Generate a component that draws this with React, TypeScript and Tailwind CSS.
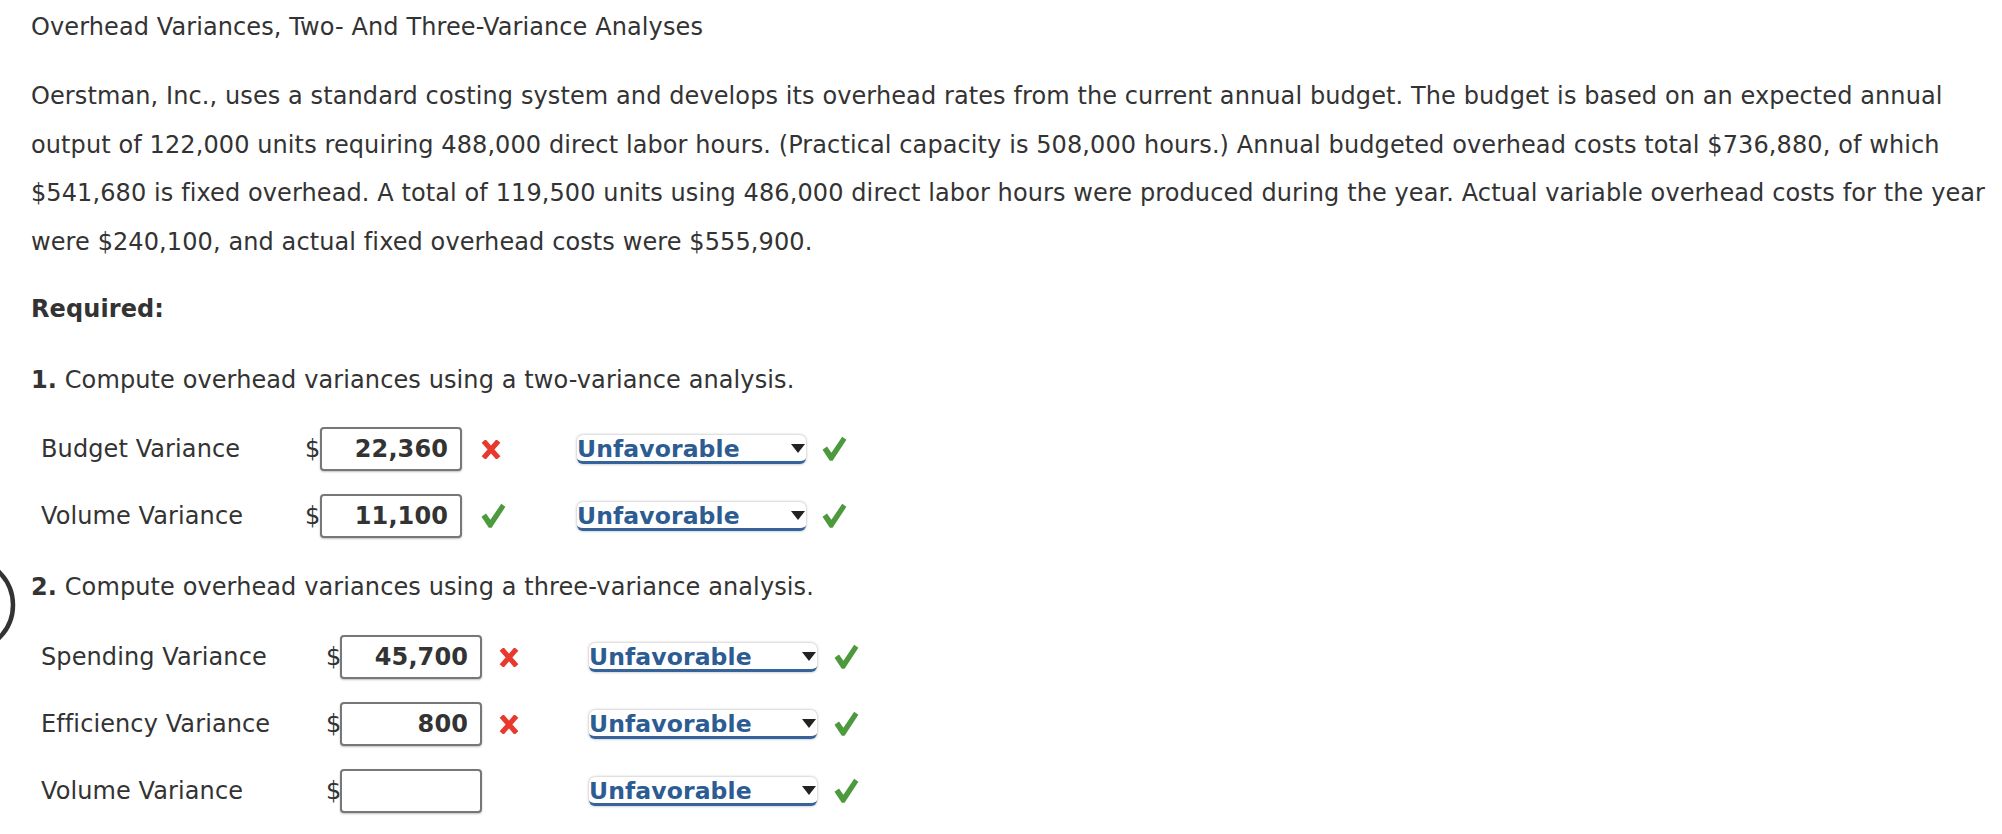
import React from 'react';

const font = "font-['DejaVu_Sans',Verdana,sans-serif]";

function RedX() {
  return (
    <svg width="20" height="19" viewBox="0 0 20 19" className="block">
      <path d="M2.6 1 L17.4 18 M17.4 1 L2.6 18" stroke="#e8392e" strokeWidth="5.2" fill="none" />
    </svg>
  );
}

function GreenCheck() {
  return (
    <svg width="25" height="26" viewBox="0 0 25 26" className="block">
      <path d="M0.5 13.8 L5 10.6 L9.4 16.8 L20.2 0.8 L24.4 3.8 L10.6 24.8 L7.8 24.8 Z" fill="#4c9a3d" />
    </svg>
  );
}

function Select() {
  return (
    <div className="relative flex h-[29px] w-full items-end rounded-[6px] border-b-[3px] border-[#36649a] bg-white shadow-[0_0_3px_rgba(0,0,0,0.35)]">
      <span className="text-[23.5px] font-bold leading-[24px] text-[#2c5c92]">Unfavorable</span>
      <svg width="14" height="9" viewBox="0 0 14 9" className="absolute right-[1px] top-[9px]">
        <path d="M0 0 H14 L7 9 Z" fill="#222" />
      </svg>
    </div>
  );
}

type Row = { label: string; value: string; mark: 'x' | 'check' | null };

function VarianceRow({ row, labelW, dollarW, markW, selectW, checkGap }: { row: Row; labelW: string; dollarW: string; markW: string; selectW: string; checkGap: string }) {
  return (
    <div className="flex h-[67px] items-center">
      <div className={labelW}>{row.label}</div>
      <div className={dollarW}>$</div>
      <div className="flex h-[44px] w-[142px] items-center justify-end rounded-[4px] border-2 border-[#777] bg-white pr-[12px] font-bold shadow-[0_1px_2px_rgba(0,0,0,0.25)]">
        {row.value}
      </div>
      <div className={markW}>
        {row.mark === 'x' && <RedX />}
        {row.mark === 'check' && <GreenCheck />}
      </div>
      <div className={selectW}>
        <Select />
      </div>
      <div className={checkGap}>
        <GreenCheck />
      </div>
    </div>
  );
}

export default function App() {
  const part1: Row[] = [
    { label: 'Budget Variance', value: '22,360', mark: 'x' },
    { label: 'Volume Variance', value: '11,100', mark: 'check' },
  ];
  const part2: Row[] = [
    { label: 'Spending Variance', value: '45,700', mark: 'x' },
    { label: 'Efficiency Variance', value: '800', mark: 'x' },
    { label: 'Volume Variance', value: '', mark: null },
  ];

  return (
    <div className={`relative min-h-screen bg-white pl-[31px] pt-[3px] text-[24px] leading-[48.5px] tracking-[0.1px] text-[#333] ${font}`}>
      {/* bit of a circle on the left edge */}
      <svg width="16" height="90" viewBox="0 0 16 90" className="absolute left-0 top-[560px]">
        <circle cx="-32.9" cy="45" r="45.9" stroke="#333" strokeWidth="4.5" fill="none" />
      </svg>

      <div className="whitespace-nowrap">Overhead Variances, Two- And Three-Variance Analyses</div>

      <div className="mt-[20.5px] whitespace-nowrap">
        <div>Oerstman, Inc., uses a standard costing system and develops its overhead rates from the current annual budget. The budget is based on an expected annual</div>
        <div>output of 122,000 units requiring 488,000 direct labor hours. (Practical capacity is 508,000 hours.) Annual budgeted overhead costs total $736,880, of which</div>
        <div>$541,680 is fixed overhead. A total of 119,500 units using 486,000 direct labor hours were produced during the year. Actual variable overhead costs for the year</div>
        <div>were $240,100, and actual fixed overhead costs were $555,900.</div>
      </div>

      <div className="mt-[19px] font-bold">Required:</div>

      <div className="mt-[22.5px]">
        <span className="font-bold">1.</span> Compute overhead variances using a two-variance analysis.
      </div>

      <div className="ml-[10px] mt-[11px] leading-none">
        {part1.map((r) => (
          <VarianceRow key={r.label} row={r} labelW="w-[264px]" dollarW="w-[15px]" markW="w-[115px] pl-[19px]" selectW="w-[229px]" checkGap="ml-[16px]" />
        ))}
      </div>

      <div className="mt-[13.5px]">
        <span className="font-bold">2.</span> Compute overhead variances using a three-variance analysis.
      </div>

      <div className="ml-[10px] mt-[12px] leading-none">
        {part2.map((r, i) => (
          <VarianceRow key={i} row={r} labelW="w-[285px]" dollarW="w-[14px]" markW="w-[107px] pl-[17px]" selectW="w-[228px]" checkGap="ml-[17px]" />
        ))}
      </div>
    </div>
  );
}
